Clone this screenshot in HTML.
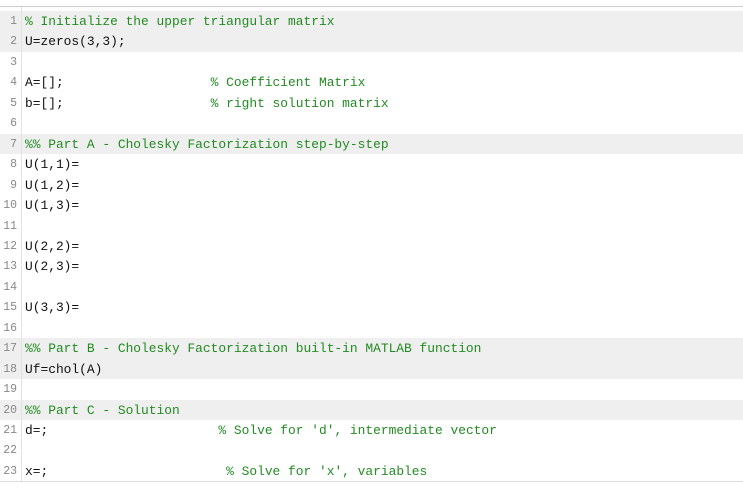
<!DOCTYPE html><html><head><style>
body{margin:0;width:743px;height:491px;background:#fff;overflow:hidden;font-family:"Liberation Mono",monospace;font-size:12.9px;}
.top{position:absolute;left:0;top:6px;width:743px;height:1px;background:#ccc}
.bot{position:absolute;left:0;top:481px;width:743px;height:1px;background:#ddd}
.gut{position:absolute;left:21px;top:7px;width:1px;height:474px;background:#e2e2e2}
.r{position:absolute;left:0;width:743px;height:20.45px;line-height:21.5px;white-space:pre;color:#111}
.r.g{background:#efefef}
.n{position:absolute;left:0;width:17px;text-align:right;color:#888;font-size:11.5px}
.c{position:absolute;left:25px}
.cm{color:#228b22}
</style></head><body>
<div class="top"></div><div class="bot"></div>
<div id="w"></div>
<script>
var L=[
["% Initialize the upper triangular matrix",1,1],
["U=zeros(3,3);",1,0],["",0,0],
["A=[];                   <span class=cm>% Coefficient Matrix</span>",0,0],
["b=[];                   <span class=cm>% right solution matrix</span>",0,0],
["",0,0],
["%% Part A - Cholesky Factorization step-by-step",1,1],
["U(1,1)=",0,0],["U(1,2)=",0,0],["U(1,3)=",0,0],["",0,0],
["U(2,2)=",0,0],["U(2,3)=",0,0],["",0,0],["U(3,3)=",0,0],["",0,0],
["%% Part B - Cholesky Factorization built-in MATLAB function",1,1],
["Uf=chol(A)",1,0],["",0,0],
["%% Part C - Solution",1,1],
["d=;                      <span class=cm>% Solve for 'd', intermediate vector</span>",0,0],
["",0,0],
["x=;                       <span class=cm>% Solve for 'x', variables</span>",0,0]];
var h="";
L.forEach(function(l,i){h+='<div class="r'+(l[1]?' g':'')+'" style="top:'+(11+i*20.45)+'px"><span class="n">'+(i+1)+'</span><span class="c'+(l[2]?' cm':'')+'">'+l[0]+'</span></div>';});
document.getElementById('w').innerHTML=h+'<div class="gut"></div>';
</script>
</body></html>
